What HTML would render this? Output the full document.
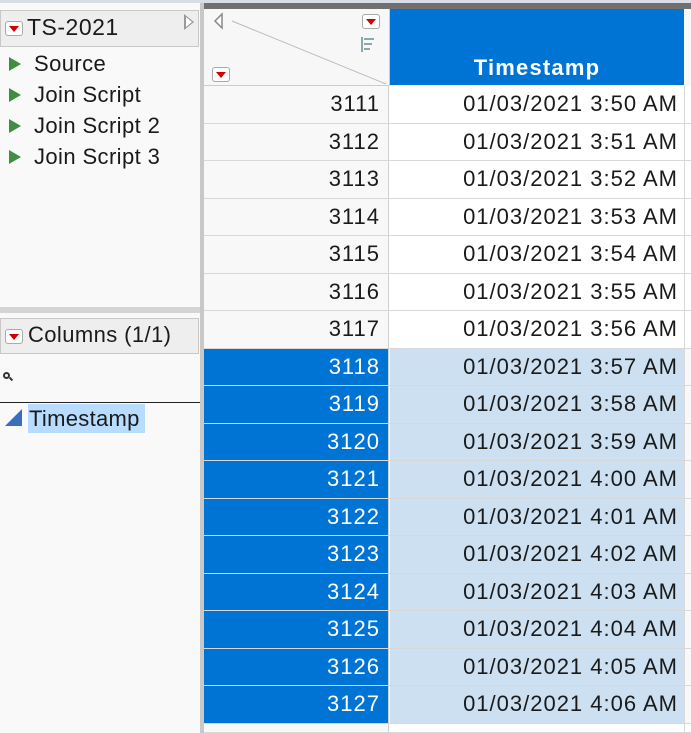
<!DOCTYPE html>
<html><head><style>
*{margin:0;padding:0;box-sizing:border-box}
html,body{width:691px;height:733px;overflow:hidden}
body{background:#f8f8f8;font-family:"Liberation Sans",sans-serif;color:#1a1a1a;position:relative}
.a{position:absolute}
.dd{position:absolute;width:18px;height:15px;border:1px solid #aaa;border-radius:3px;background:#fff}
.dd:after{content:"";position:absolute;left:3px;top:4px;border-left:5px solid transparent;border-right:5px solid transparent;border-top:6px solid #d00000}
.tri{position:absolute;left:9px;width:0;height:0;border-top:7px solid transparent;border-bottom:7px solid transparent;border-left:12px solid #3f8f3f}
.lt{position:absolute;left:34px;font-size:22px;letter-spacing:0.4px}
.row{position:absolute;left:204px;width:487px;font-size:22px;letter-spacing:1px;overflow:hidden}
.n{position:absolute;left:0;top:0;width:185px;bottom:1px;text-align:right;padding-right:8px;line-height:36px;border-right:1px solid #d0d0d0}
.t{position:absolute;left:186px;top:0;width:295px;bottom:1px;text-align:right;padding-right:6px;line-height:36px;border-right:1px solid #d8d8d8}
.row:after{content:"";position:absolute;left:0;right:0;bottom:0;height:1px;background:#d8d8d8}
.s .n{background:#0074d4;color:#fff}.s .t{background:#cce0f2}
.u{background:#fff}.u .n{background:#f8f8f8}
</style></head><body>
<div class="a" style="left:0;top:0;width:691px;height:3px;background:#d8dde6"></div>
<div class="a" style="left:204px;top:3px;width:487px;height:6px;background:#707070"></div>
<div class="a" style="left:0;top:3px;width:200px;height:730px;background:#f9f9f9"></div>
<div class="a" style="left:0;top:10px;width:199px;height:37px;background:#eeeeee;border:1px solid #c8c8c8"></div>
<div class="dd" style="left:5px;top:21px"></div>
<div class="a" style="left:27px;top:14px;font-size:23px;letter-spacing:0.5px">TS-2021</div>
<div class="a" style="left:184px;top:14px;width:0;height:0;border-top:8px solid transparent;border-bottom:8px solid transparent;border-left:10px solid #999"></div>
<div class="a" style="left:186px;top:17px;width:0;height:0;border-top:5px solid transparent;border-bottom:5px solid transparent;border-left:6px solid #fff"></div>
<div class="tri" style="top:57px"></div><div class="lt" style="top:51px">Source</div>
<div class="tri" style="top:88px"></div><div class="lt" style="top:82px">Join Script</div>
<div class="tri" style="top:119px"></div><div class="lt" style="top:113px">Join Script 2</div>
<div class="tri" style="top:150px"></div><div class="lt" style="top:144px">Join Script 3</div>
<div class="a" style="left:0;top:307px;width:200px;height:6px;background:#d4d4d4"></div>
<div class="a" style="left:0;top:318px;width:199px;height:36px;background:#eeeeee;border:1px solid #c8c8c8"></div>
<div class="dd" style="left:5px;top:329px"></div>
<div class="a" style="left:28px;top:322px;font-size:22px;letter-spacing:0.4px">Columns (1/1)</div>
<div class="a" style="left:3px;top:372px;width:7px;height:7px;border:2px solid #333;border-radius:50%"></div>
<div class="a" style="left:9px;top:378px;width:4px;height:2px;background:#333;transform:rotate(45deg)"></div>
<div class="a" style="left:0;top:402px;width:200px;height:1px;background:#222"></div>
<div class="a" style="left:5px;top:409px;width:0;height:0;border-bottom:17px solid #3a6fc0;border-left:17px solid transparent"></div>
<div class="a" style="left:28px;top:404px;width:117px;height:29px;background:#b8dcff;font-size:22px;line-height:29px;padding-left:1px;letter-spacing:0.3px">Timestamp</div>
<div class="a" style="left:200px;top:3px;width:4px;height:730px;background:#c8c8c8"></div>
<div class="a" style="left:204px;top:9px;width:186px;height:77px;background:#f7f7f7;border-right:1px solid #ccc;border-bottom:1px solid #ccc"></div>
<svg class="a" style="left:204px;top:9px" width="186" height="77"><line x1="28" y1="12" x2="182" y2="75" stroke="#bbb" stroke-width="1"/><path d="M18 5 L11 12 L18 19 Z" fill="#fff" stroke="#888" stroke-width="1.5"/><g stroke="#8aa" stroke-width="2"><line x1="158" y1="28" x2="158" y2="43"/><line x1="160" y1="30" x2="170" y2="30"/><line x1="160" y1="35" x2="168" y2="35"/><line x1="160" y1="40" x2="166" y2="40"/></g></svg>
<div class="dd" style="left:362px;top:14px"></div>
<div class="dd" style="left:212px;top:67px"></div>
<div class="a" style="left:390px;top:9px;width:294px;height:76px;background:#0074d4;color:#fff;font-weight:bold;font-size:22px;letter-spacing:1.2px;text-align:center;line-height:20px;padding-top:49px">Timestamp</div>
<div class="a" style="left:684px;top:9px;width:7px;height:77px;background:#f8f8f8"></div>
<div class="row u" style="top:86px;height:38px"><div class="n">3111</div><div class="t">01/03/2021 3:50 AM</div></div>
<div class="row u" style="top:124px;height:37px"><div class="n">3112</div><div class="t">01/03/2021 3:51 AM</div></div>
<div class="row u" style="top:161px;height:38px"><div class="n">3113</div><div class="t">01/03/2021 3:52 AM</div></div>
<div class="row u" style="top:199px;height:37px"><div class="n">3114</div><div class="t">01/03/2021 3:53 AM</div></div>
<div class="row u" style="top:236px;height:38px"><div class="n">3115</div><div class="t">01/03/2021 3:54 AM</div></div>
<div class="row u" style="top:274px;height:37px"><div class="n">3116</div><div class="t">01/03/2021 3:55 AM</div></div>
<div class="row u" style="top:311px;height:38px"><div class="n">3117</div><div class="t">01/03/2021 3:56 AM</div></div>
<div class="row s" style="top:349px;height:37px"><div class="n">3118</div><div class="t">01/03/2021 3:57 AM</div></div>
<div class="row s" style="top:386px;height:38px"><div class="n">3119</div><div class="t">01/03/2021 3:58 AM</div></div>
<div class="row s" style="top:424px;height:37px"><div class="n">3120</div><div class="t">01/03/2021 3:59 AM</div></div>
<div class="row s" style="top:461px;height:38px"><div class="n">3121</div><div class="t">01/03/2021 4:00 AM</div></div>
<div class="row s" style="top:499px;height:37px"><div class="n">3122</div><div class="t">01/03/2021 4:01 AM</div></div>
<div class="row s" style="top:536px;height:38px"><div class="n">3123</div><div class="t">01/03/2021 4:02 AM</div></div>
<div class="row s" style="top:574px;height:37px"><div class="n">3124</div><div class="t">01/03/2021 4:03 AM</div></div>
<div class="row s" style="top:611px;height:38px"><div class="n">3125</div><div class="t">01/03/2021 4:04 AM</div></div>
<div class="row s" style="top:649px;height:37px"><div class="n">3126</div><div class="t">01/03/2021 4:05 AM</div></div>
<div class="row s" style="top:686px;height:38px"><div class="n">3127</div><div class="t">01/03/2021 4:06 AM</div></div>
<div class="row u" style="top:724px;height:9px"><div class="n" style="line-height:36px">3128</div><div class="t">01/03/2021 4:07 AM</div></div>
</body></html>
